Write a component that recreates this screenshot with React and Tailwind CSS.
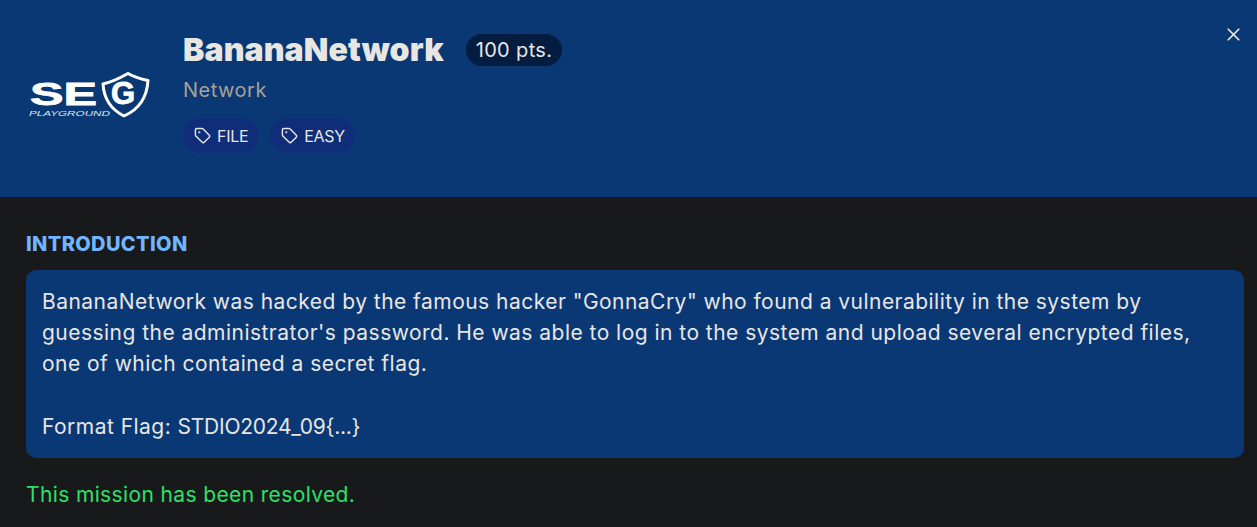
import { Tag, X } from 'lucide-react';

const font = { fontFamily: 'Inter, "Liberation Sans", sans-serif' };

function Logo() {
  return (
    <svg width="122" height="50" viewBox="0 0 122 50" fill="none">
      <text x="2" y="33" fill="#fff" stroke="#fff" strokeWidth="0.8" fontFamily="Liberation Sans" fontWeight="700" fontSize="31" textLength="67" lengthAdjust="spacingAndGlyphs">SE</text>
      <text x="1" y="43.5" fill="#dfe6f0" fontFamily="Liberation Sans" fontStyle="italic" fontSize="7.5" textLength="81" lengthAdjust="spacingAndGlyphs">PLAYGROUND</text>
      <path d="M75 12 C84 10 92 6 100 1.5 C106 5 113 7 120 8.5 C119 25 112 37 96 44 C84 38 76 28 75 12 Z" stroke="#fff" strokeWidth="3" strokeLinejoin="round" />
      <text x="83" y="32" fill="#fff" stroke="#fff" strokeWidth="0.8" fontFamily="Liberation Sans" fontWeight="700" fontSize="31">G</text>
    </svg>
  );
}

function Chip({ label }) {
  return (
    <span className="flex items-center gap-[6px] h-[35px] pl-[11px] pr-[10px] rounded-full bg-[#0f2d78] text-[#e8e6e3] text-[16px] tracking-[-0.3px]">
      <Tag size={17} strokeWidth={2} />
      {label}
    </span>
  );
}

export default function App() {
  return (
    <div style={font} className="w-[1257px] h-[527px] overflow-hidden bg-[#18191b] text-[#e8e6e3]">
      {/* header */}
      <div className="relative flex h-[197px] bg-[#0a3875] pl-[28px]">
        <div className="w-[155px] pt-[72px] shrink-0">
          <Logo />
        </div>
        <div className="pt-[30px]">
          <div className="flex items-center gap-[22px] h-[40px]">
            <h2 className="text-[32px] font-black tracking-[0.1px] leading-[40px]">BananaNetwork</h2>
            <span className="h-[32px] px-[10px] rounded-full bg-[#031c3f] text-[20px] tracking-[0.35px] leading-[32px]">100 pts.</span>
          </div>
          <p className="mt-[5px] text-[20px] tracking-[0.5px] leading-[30px] text-[#a8a296]">Network</p>
          <div className="flex gap-[12px] mt-[13px]">
            <Chip label="FILE" />
            <Chip label="EASY" />
          </div>
        </div>
        <button className="absolute top-[24px] right-[13px] text-[#e8e6e3]">
          <X size={21} strokeWidth={2} />
        </button>
      </div>

      {/* body */}
      <div className="pl-[26px] pr-[13px] pt-[32px]">
        <h3 className="text-[20px] font-extrabold tracking-[0.37px] leading-[30px] text-[#70b5ff]">INTRODUCTION</h3>
        <div className="mt-[11px] rounded-[10px] bg-[#0a3875] p-[16px] text-[21px] tracking-[0.47px] leading-[31.2px]">
          <p>BananaNetwork was hacked by the famous hacker "GonnaCry" who found a vulnerability in the system by</p>
          <p>guessing the administrator's password. He was able to log in to the system and upload several encrypted files,</p>
          <p>one of which contained a secret flag.</p>
          <p className="mt-[31.2px]">Format Flag: <span className="tracking-[-0.25px]">STDIO2024_09{'{...}'}</span></p>
        </div>
        <p className="mt-[22px] text-[21px] tracking-[0.37px] leading-[30px] text-[#2fe068]">This mission has been resolved.</p>
      </div>
    </div>
  );
}
